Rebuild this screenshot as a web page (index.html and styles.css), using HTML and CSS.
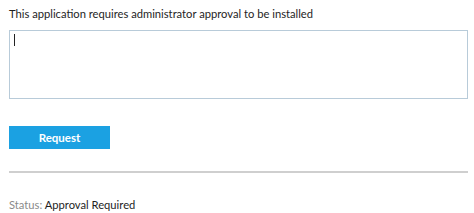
FILE: index.html
```html
<!DOCTYPE html>
<html lang="en">
<head>
    <meta charset="UTF-8">
    <title>Approval Request</title>
    <link rel="stylesheet" href="styles.css">
</head>
<body>
    <div class="container">
        <label class="prompt" for="reason">This application requires administrator approval to be installed</label>
        <div class="field"><span class="caret"></span></div>
        <button type="button" class="btn">Request</button>
        <hr class="divider">
        <div class="status"><span class="status-label">Status:</span> Approval Required</div>
    </div>
</body>
</html>
```

FILE: styles.css
```css
* {
    box-sizing: border-box;
    margin: 0;
    padding: 0;
}

body {
    background: #fff;
    font-family: 'Lato', sans-serif;
    font-size: 11.2px;
    color: #222;
}

.container {
    width: 459px;
    margin-left: 9px;
    padding-top: 6px;
    display: flex;
    flex-direction: column;
    align-items: flex-start;
}

.prompt {
    display: block;
    line-height: 15px;
    color: #1e1e1e;
}

.field {
    margin-top: 9px;
    width: 100%;
    height: 69px;
    border: 1px solid #b8cbd9;
    padding: 3px 4px;
}

.caret {
    display: block;
    width: 1px;
    height: 12px;
    background: #222;
}

.btn {
    margin-top: 27px;
    width: 101px;
    height: 23px;
    border: none;
    background: #1ba1e2;
    color: #fff;
    font-family: 'Lato', sans-serif;
    font-weight: bold;
    font-size: 11.5px;
}

.divider {
    margin-top: 22px;
    width: 100%;
    border: none;
    height: 2px;
    background: #cfcfcf;
}

.status {
    margin-top: 24px;
    line-height: 16px;
    color: #1e1e1e;
}

.status-label {
    color: #8a8a8a;
}
```
